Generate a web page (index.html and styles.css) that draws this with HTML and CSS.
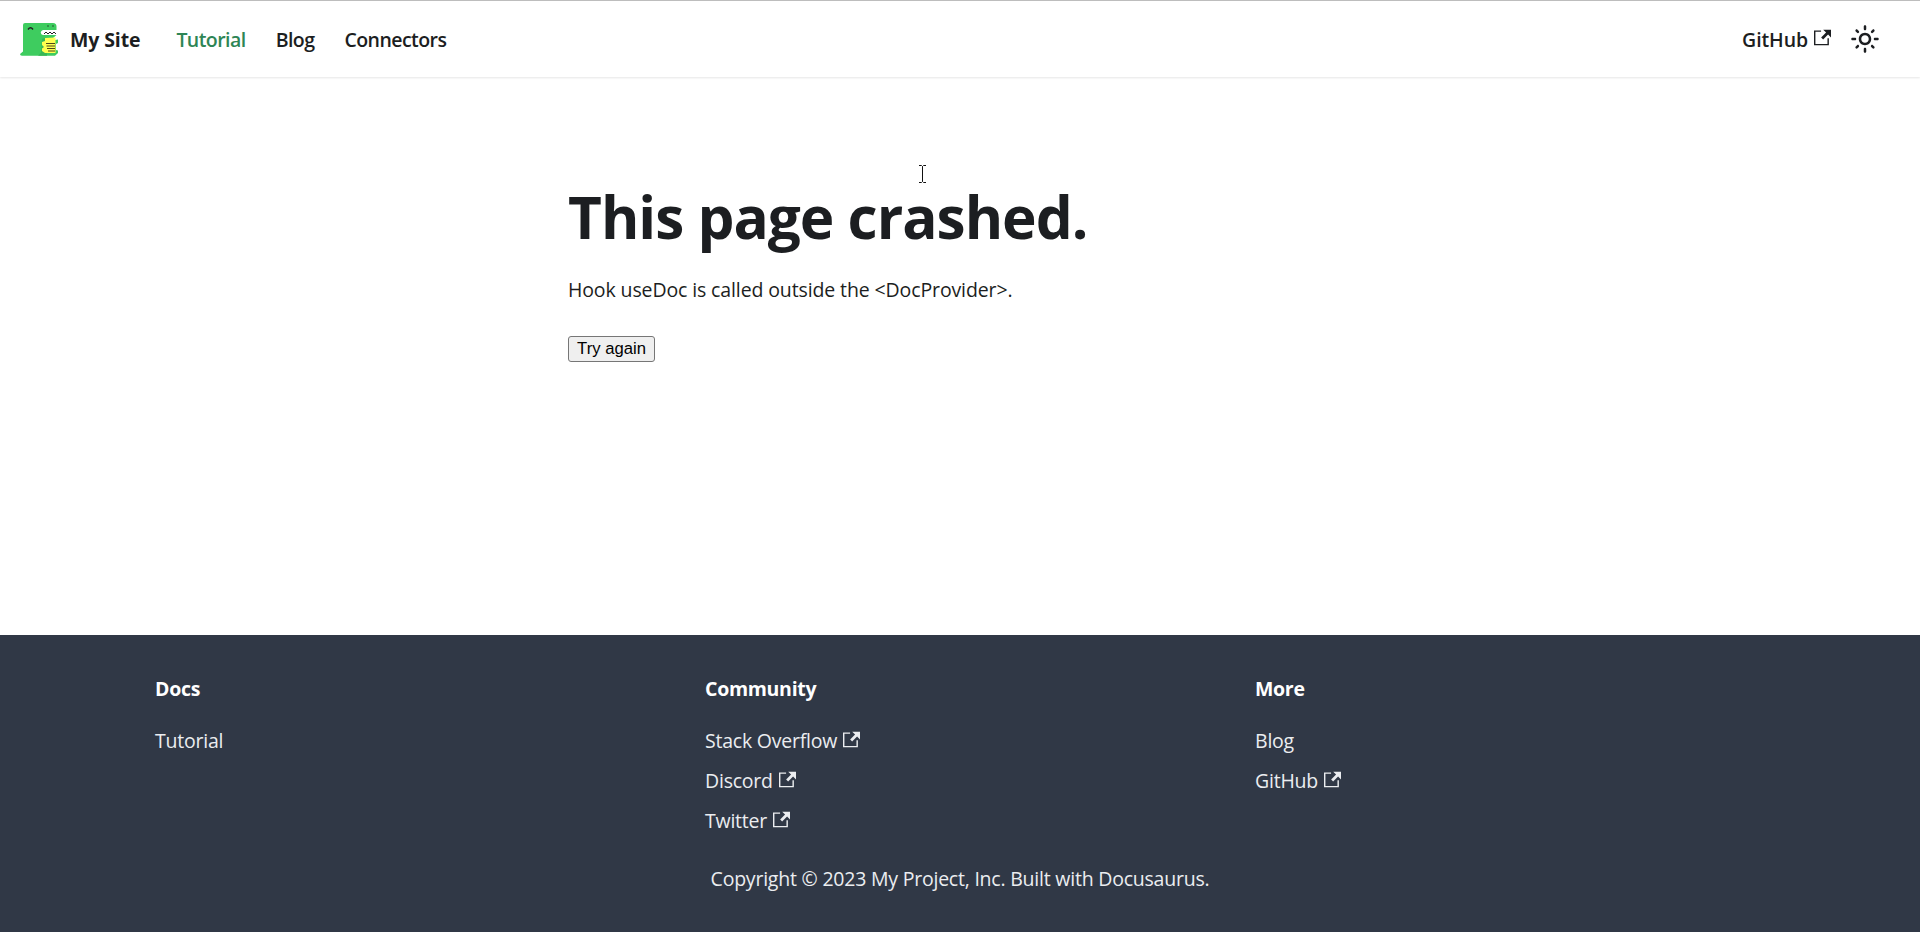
FILE: index.html
```html
<!DOCTYPE html>
<html lang="en">
<head>
<meta charset="utf-8">
<title>This page crashed.</title>
<link rel="stylesheet" href="styles.css">
</head>
<body>
<nav class="navbar">
  <div class="nav-left">
    <a class="brand" href="#">
      <svg class="logo" viewBox="0 0 40 36" aria-hidden="true">
        <path class="dino" d="M5 2h28q3.500 0 3.500 3.500V14L33 17H29l6 2 3-.5V22l-2 1v6l2 .5V32l-3 2.700H2Q0 34.700 0 33l3-2.500V4q0-2 2-2z"/>
        <path class="dino-shade" d="M18 34.700l3-3 1-14 4-1 1 18z"/>
        <path class="paper" d="M25 17l10.500-.5V32H25l-3-2v-2.500L24 26l-2-2v-3l3-1z"/>
        <path class="lines" d="M26 22.500h9M26.500 25h8.500M27 27.500h8M28 30h7"/>
        <path class="jaw" d="M23 9h14.500v5H23q-2.200-.5-2.200-2.500T23 9z"/>
        <path class="teeth" d="M24 13l2-2 2 2 2-2 2 2 2-2 2 2"/>
        <path class="brow" d="M8 8.500q2.500-3.500 5 0"/>
        <circle class="eye" cx="28" cy="5" r=".7"/>
        <circle class="eye" cx="33" cy="5" r=".7"/>
      </svg>
      <b class="title">My Site</b>
    </a>
    <a class="nav-link active" href="#">Tutorial</a>
    <a class="nav-link" href="#">Blog</a>
    <a class="nav-link" href="#">Connectors</a>
  </div>
  <div class="nav-right">
    <a class="nav-link" href="#">GitHub<svg class="ext" viewBox="0 0 24 24"><path d="M21 13v10h-21v-21h10v2h-8v17h17v-8h2zm3-12h-10.988l4.035 4-6.977 7.07 2.828 2.828 6.977-7.07 4.125 4.172v-11z"/></svg></a>
    <button class="theme" type="button" aria-label="Switch theme">
      <svg viewBox="0 0 24 24"><path d="M12,9c1.65,0,3,1.35,3,3s-1.35,3-3,3s-3-1.35-3-3S10.35,9,12,9 M12,7c-2.76,0-5,2.24-5,5s2.24,5,5,5s5-2.24,5-5 S14.76,7,12,7L12,7z M2,13l2,0c0.55,0,1-0.45,1-1s-0.45-1-1-1l-2,0c-0.55,0-1,0.45-1,1S1.45,13,2,13z M20,13l2,0c0.55,0,1-0.45,1-1 s-0.45-1-1-1l-2,0c-0.55,0-1,0.45-1,1S19.45,13,20,13z M11,2v2c0,0.55,0.45,1,1,1s1-0.45,1-1V2c0-0.55-0.45-1-1-1S11,1.45,11,2z M11,20v2c0,0.55,0.45,1,1,1s1-0.45,1-1v-2c0-0.55-0.45-1-1-1C11.45,19,11,19.45,11,20z M5.99,4.58c-0.39-0.39-1.03-0.39-1.41,0 c-0.39,0.39-0.39,1.03,0,1.41l1.06,1.06c0.39,0.39,1.03,0.39,1.41,0s0.39-1.03,0-1.41L5.99,4.58z M18.36,16.95 c-0.39-0.39-1.03-0.39-1.41,0c-0.39,0.39-0.39,1.03,0,1.41l1.06,1.06c0.39,0.39,1.03,0.39,1.41,0c0.39-0.39,0.39-1.03,0-1.41 L18.36,16.95z M19.42,5.99c0.39-0.39,0.39-1.03,0-1.41c-0.39-0.39-1.03-0.39-1.41,0l-1.06,1.06c-0.39,0.39-0.39,1.03,0,1.41 s1.03,0.39,1.41,0L19.42,5.99z M7.05,18.36c0.39-0.39,0.39-1.03,0-1.41c-0.39-0.39-1.03-0.39-1.41,0l-1.06,1.06 c-0.39,0.39-0.39,1.03,0,1.41s1.03,0.39,1.41,0L7.05,18.36z"/></svg>
    </button>
  </div>
</nav>
<main class="main">
  <div class="content">
    <h1 class="crash-title">This page crashed.</h1>
    <p class="crash-msg">Hook useDoc is called outside the &lt;DocProvider&gt;.</p>
    <button class="retry" type="button">Try again</button>
  </div>
  <svg class="cursor" viewBox="0 0 9 18" aria-hidden="true"><path d="M1 .5h2.500l1 1 1-1H8M4.500 1.500v15M1 17.500h2.500l1-1 1 1H8"/></svg>
</main>
<footer class="footer">
  <div class="footer-cols">
    <div class="col">
      <div class="col-title">Docs</div>
      <a class="foot-link" href="#">Tutorial</a>
    </div>
    <div class="col">
      <div class="col-title">Community</div>
      <a class="foot-link" href="#">Stack Overflow<svg class="ext" viewBox="0 0 24 24"><path d="M21 13v10h-21v-21h10v2h-8v17h17v-8h2zm3-12h-10.988l4.035 4-6.977 7.07 2.828 2.828 6.977-7.07 4.125 4.172v-11z"/></svg></a>
      <a class="foot-link" href="#">Discord<svg class="ext" viewBox="0 0 24 24"><path d="M21 13v10h-21v-21h10v2h-8v17h17v-8h2zm3-12h-10.988l4.035 4-6.977 7.07 2.828 2.828 6.977-7.07 4.125 4.172v-11z"/></svg></a>
      <a class="foot-link" href="#">Twitter<svg class="ext" viewBox="0 0 24 24"><path d="M21 13v10h-21v-21h10v2h-8v17h17v-8h2zm3-12h-10.988l4.035 4-6.977 7.07 2.828 2.828 6.977-7.07 4.125 4.172v-11z"/></svg></a>
    </div>
    <div class="col">
      <div class="col-title">More</div>
      <a class="foot-link" href="#">Blog</a>
      <a class="foot-link" href="#">GitHub<svg class="ext" viewBox="0 0 24 24"><path d="M21 13v10h-21v-21h10v2h-8v17h17v-8h2zm3-12h-10.988l4.035 4-6.977 7.070 2.828 2.828 6.977-7.070 4.125 4.172v-11z"/></svg></a>
    </div>
  </div>
  <div class="copyright">Copyright © 2023 My Project, Inc. Built with Docusaurus.</div>
</footer>
</body>
</html>
```

FILE: styles.css
```css
* { box-sizing: border-box; }
html, body { margin: 0; height: 100%; }
body {
  display: flex;
  flex-direction: column;
  height: 932px;
  overflow: hidden;
  font-family: "Open Sans", "Noto Sans", sans-serif;
  font-size: 19.5px;
  letter-spacing: -0.12px;
  line-height: 33px;
  color: #1c1e21;
  background: #fff;
  border-top: 1px solid #bdbdbd;
}
a { color: inherit; text-decoration: none; }
.navbar {
  flex: none;
  height: 76px;
  padding: 0 20px;
  display: flex;
  justify-content: space-between;
  align-items: center;
  box-shadow: 0 1px 2px rgba(0, 0, 0, .1);
}
.nav-left, .nav-right { display: flex; align-items: center; }
.brand { display: flex; align-items: center; margin-right: 21px; }
.logo { width: 40px; height: 36px; margin-right: 10px; }
.dino { fill: #3ecc5f; }
.dino-shade { fill: #38b755; }
.paper { fill: #ffff50; }
.lines { fill: none; stroke: #4a4a1a; stroke-width: 1; }
.jaw { fill: #fff; }
.teeth { fill: none; stroke: #222; stroke-width: 1; }
.brow { fill: none; stroke: #222; stroke-width: 1.400; }
.eye { fill: #222; }
.title { font-weight: 700; }
.nav-link { padding: 0 15px; font-weight: 600; letter-spacing: -0.55px; display: flex; align-items: center; }
.active { color: #2e8555; }
.ext { width: 17px; height: 17px; margin-left: 6px; fill: currentColor; position: relative; top: -2px; }
.nav-right .nav-link { padding-right: 14px; letter-spacing: -0.1px; }
.theme {
  width: 40px; height: 40px; padding: 5px; margin-right: 15px;
  border: 0; background: none; color: #1c1e21;
}
.theme svg { display: block; width: 30px; height: 30px; fill: currentColor; }
.main { flex: 1; position: relative; }
.content { width: 785px; margin: 0 0 0 568px; padding-top: 102px; }
.crash-title { margin: 0 0 19px; font-size: 58.5px; line-height: 75px; font-weight: 700; letter-spacing: -1px; }
.crash-msg { margin: 0 0 30px; }
.retry {
  display: block;
  height: 26px;
  width: 87px;
  padding: 0;
  font: 16.670px "Liberation Sans", Arial, sans-serif;
  letter-spacing: 0;
  color: #000;
  background: #efefef;
  border: 1px solid #767676;
  border-radius: 3px;
}
.cursor { position: absolute; left: 918px; top: 88px; width: 9px; height: 18px; fill: none; stroke: #111; stroke-width: 1; }
.footer {
  flex: none;
  height: 297px;
  padding: 40px 155px 0;
  background: #303846;
  color: #ebedf0;
  letter-spacing: -0.22px;
}
.footer-cols { display: grid; grid-template-columns: repeat(3, 550px); }
.col { display: flex; flex-direction: column; align-items: flex-start; }
.col-title { font-weight: 700; line-height: 28px; margin-bottom: 18px; color: #fff; letter-spacing: -0.3px; }
.foot-link { line-height: 40px; display: flex; align-items: center; }
.copyright { text-align: center; margin-top: 21px; }
```
